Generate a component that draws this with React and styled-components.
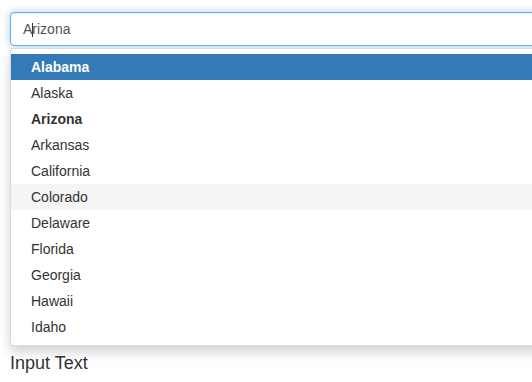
import React from 'react';
import styled, { createGlobalStyle } from 'styled-components';

const GlobalStyle = createGlobalStyle`
  html {
    overflow: hidden;
  }
  body {
    margin: 0;
    padding: 0;
    min-height: 100vh;
    background: #ffffff;
    font-family: "Liberation Sans", Arial, Helvetica, sans-serif;
    font-size: 14px;
    line-height: 1.42857;
    color: #333333;
  }
`;

const Page = styled.div`
  width: 620px;
  padding: 12px 0 0 10px;
`;

const Field = styled.div`
  position: relative;
  width: 600px;
`;

const TextInput = styled.input`
  display: block;
  box-sizing: border-box;
  width: 100%;
  height: 34px;
  padding: 6px 12px;
  font-family: inherit;
  font-size: 14px;
  line-height: 1.42857;
  color: #555555;
  background: #ffffff;
  border: 1px solid #66afe9;
  border-radius: 4px;
  outline: 0;
  caret-color: transparent;
  box-shadow: inset 0 1px 1px rgba(0, 0, 0, 0.075), 0 0 8px rgba(102, 175, 233, 0.6);
`;

const Caret = styled.span`
  position: absolute;
  left: 22px;
  top: 11px;
  width: 1px;
  height: 14px;
  background: #333333;
`;

const Menu = styled.ul`
  position: absolute;
  top: 100%;
  left: 0;
  z-index: 1000;
  box-sizing: border-box;
  width: 100%;
  margin: 2px 0 0;
  padding: 5px 0;
  list-style: none;
  background: #ffffff;
  border: 1px solid rgba(0, 0, 0, 0.15);
  border-radius: 4px;
  box-shadow: 0 6px 12px rgba(0, 0, 0, 0.175);
`;

const Item = styled.li`
  display: block;
  padding: 3px 20px;
  line-height: 20px;
  white-space: nowrap;
  font-weight: ${p => (p.$bold ? 700 : 400)};
  color: ${p => (p.$active ? '#ffffff' : '#333333')};
  background: ${p => (p.$active ? '#337ab7' : p.$hover ? '#f5f5f5' : 'transparent')};
`;

const Spacer = styled.div`
  height: 307px;
`;

const Label = styled.div`
  font-size: 18px;
  line-height: 20px;
  color: #333333;
`;

const states = [
  'Alabama',
  'Alaska',
  'Arizona',
  'Arkansas',
  'California',
  'Colorado',
  'Delaware',
  'Florida',
  'Georgia',
  'Hawaii',
  'Idaho',
];

const App = () => {
  const query = 'Arizona';

  return (
    <>
      <GlobalStyle />
      <Page>
        <Field>
          <TextInput type="text" defaultValue={query} />
          <Caret />
          <Menu>
            {states.map((name, index) => (
              <Item
                key={name}
                $active={index === 0}
                $hover={name === 'Colorado'}
                $bold={index === 0 || name === query}
              >
                {name}
              </Item>
            ))}
          </Menu>
        </Field>
        <Spacer />
        <Label>Input Text</Label>
      </Page>
    </>
  );
};

export default App;
